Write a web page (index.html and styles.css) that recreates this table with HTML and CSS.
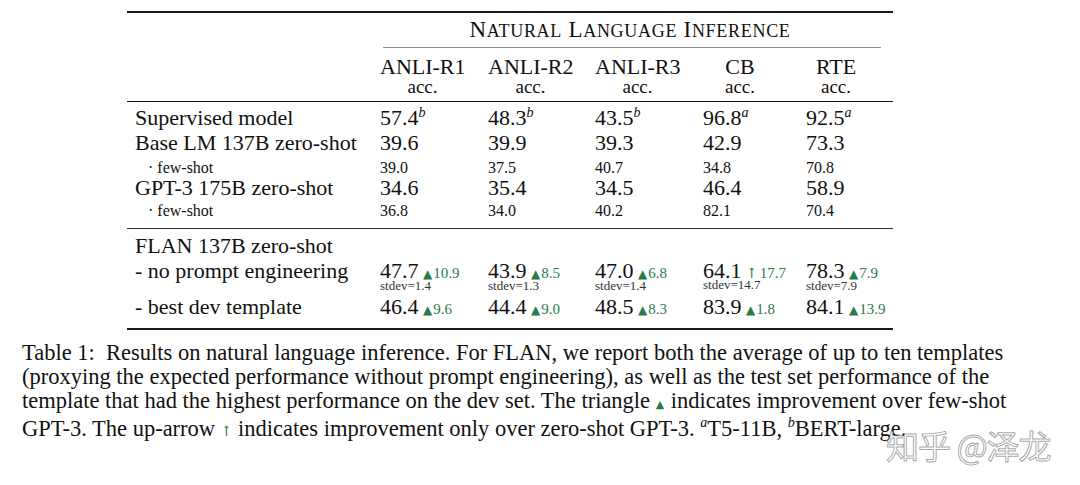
FILE: index.html
```html
<!DOCTYPE html>
<html>
<head>
<meta charset="utf-8">
<link rel="stylesheet" href="styles.css">
</head>
<body>
<div class="page">
  <table class="results">
    <colgroup>
      <col class="c-label"><col class="c1"><col class="c2"><col class="c3"><col class="c4"><col class="c5">
    </colgroup>
    <thead>
      <tr class="group-row">
        <th></th>
        <th colspan="5" class="group"><div class="group-inner">N<span class="sc">ATURAL</span> L<span class="sc">ANGUAGE</span> I<span class="sc">NFERENCE</span></div></th>
      </tr>
      <tr class="head-row">
        <th></th>
        <th class="h1">ANLI-R1<span class="metric">acc.</span></th>
        <th class="h2">ANLI-R2<span class="metric">acc.</span></th>
        <th class="h3">ANLI-R3<span class="metric">acc.</span></th>
        <th class="h4">CB<span class="metric">acc.</span></th>
        <th class="h5">RTE<span class="metric">acc.</span></th>
      </tr>
    </thead>
    <tbody class="grp1">
      <tr class="main first">
        <td class="label">Supervised model</td>
        <td>57.4<sup><i>b</i></sup></td>
        <td>48.3<sup><i>b</i></sup></td>
        <td>43.5<sup><i>b</i></sup></td>
        <td>96.8<sup><i>a</i></sup></td>
        <td>92.5<sup><i>a</i></sup></td>
      </tr>
      <tr class="main">
        <td class="label">Base LM 137B zero-shot</td>
        <td>39.6</td><td>39.9</td><td>39.3</td><td>42.9</td><td>73.3</td>
      </tr>
      <tr class="small s1">
        <td class="label sub">· few-shot</td>
        <td>39.0</td><td>37.5</td><td>40.7</td><td>34.8</td><td>70.8</td>
      </tr>
      <tr class="main">
        <td class="label">GPT-3 175B zero-shot</td>
        <td>34.6</td><td>35.4</td><td>34.5</td><td>46.4</td><td>58.9</td>
      </tr>
      <tr class="small s2 last">
        <td class="label sub">· few-shot</td>
        <td>36.8</td><td>34.0</td><td>40.2</td><td>82.1</td><td>70.4</td>
      </tr>
    </tbody>
    <tbody class="grp2">
      <tr class="main first">
        <td class="label">FLAN 137B zero-shot</td>
        <td></td><td></td><td></td><td></td><td></td>
      </tr>
      <tr class="main stack">
        <td class="label">- no prompt engineering</td>
        <td>47.7 <span class="gain"><span class="tri">▲</span>10.9</span><span class="sd">stdev=1.4</span></td>
        <td>43.9 <span class="gain"><span class="tri">▲</span>8.5</span><span class="sd">stdev=1.3</span></td>
        <td>47.0 <span class="gain"><span class="tri">▲</span>6.8</span><span class="sd">stdev=1.4</span></td>
        <td>64.1 <span class="gain"><span class="arr">↑</span>17.7</span><span class="sd">stdev=14.7</span></td>
        <td>78.3 <span class="gain"><span class="tri">▲</span>7.9</span><span class="sd">stdev=7.9</span></td>
      </tr>
      <tr class="main last">
        <td class="label">- best dev template</td>
        <td>46.4 <span class="gain"><span class="tri">▲</span>9.6</span></td>
        <td>44.4 <span class="gain"><span class="tri">▲</span>9.0</span></td>
        <td>48.5 <span class="gain"><span class="tri">▲</span>8.3</span></td>
        <td>83.9 <span class="gain"><span class="tri">▲</span>1.8</span></td>
        <td>84.1 <span class="gain"><span class="tri">▲</span>13.9</span></td>
      </tr>
    </tbody>
  </table>

  <p class="caption">Table 1:&nbsp; Results on natural language inference. For FLAN, we report both the average of up to ten templates<br>(proxying the expected performance without prompt engineering), as well as the test set performance of the<br>template that had the highest performance on the dev set. The triangle <span class="tri cap-tri">▲</span> indicates improvement over few-shot<br>GPT-3. The up-arrow <span class="arr cap-arr">↑</span> indicates improvement only over zero-shot GPT-3. <sup><i>a</i></sup>T5-11B, <sup><i>b</i></sup>BERT-large.</p>

  <div class="watermark">知乎 @泽龙</div>
</div>
</body>
</html>
```
FILE: styles.css
```css
html, body {
  margin: 0;
  padding: 0;
  background: #ffffff;
}

body {
  font-family: "Liberation Serif", "Times New Roman", serif;
  color: #111111;
  width: 1080px;
  height: 485px;
  overflow: hidden;
}

.page {
  position: relative;
  padding-top: 11px;
}

.results {
  margin-left: 127px;
  width: 766px;
  table-layout: fixed;
  border-collapse: collapse;
  border-top: 2px solid #1a1a1a;
  border-bottom: 2px solid #1a1a1a;
}

.c-label { width: 253px; }
.c1 { width: 108px; }
.c2 { width: 107px; }
.c3 { width: 108px; }
.c4 { width: 103px; }
.c5 { width: 87px; }

.results th,
.results td {
  padding: 0;
  font-weight: normal;
  text-align: left;
  white-space: nowrap;
  vertical-align: top;
}

/* group heading */
.group-row th {
  height: 35px;
}
.group-inner {
  margin: 0 12px 0 3px;
  height: 34px;
  line-height: 34px;
  text-align: center;
  font-size: 23px;
  letter-spacing: 0.7px;
  border-bottom: 1px solid #8a8a8a;
  padding-right: 4px;
}
.sc {
  font-size: 18px;
}

/* column heads */
.head-row th {
  text-align: center;
  font-size: 22px;
  line-height: 22px;
  padding-top: 8px;
  padding-bottom: 5px;
}
.head-row th .metric {
  display: block;
  font-size: 19px;
  line-height: 18px;
}
.h1 { padding-right: 23px !important; }
.h2 { padding-right: 22px !important; }
.h3 { padding-right: 23px !important; }
.h4 { padding-right: 29px !important; }
.h5 { padding-right: 27px !important; }

.results thead {
  border-bottom: 1px solid #1a1a1a;
}

.grp1 {
  border-bottom: 1px solid #333333;
}

/* body rows */
tr.main td {
  font-size: 22px;
  line-height: 22px;
  height: 22px;
}
tr.small td {
  font-size: 16px;
  line-height: 17px;
}
tr.s1 td {
  padding-top: 5px;
  padding-bottom: 1px;
}
tr.s2 td {
  padding-top: 3px;
}
.grp1 tr.first td {
  padding-top: 5px;
  padding-bottom: 3px;
}
.grp2 tr.first td {
  padding-top: 6px;
}
.grp1 tr.last td {
  padding-bottom: 9px;
}
.grp2 tr.last td {
  padding-bottom: 7px;
}

tr.stack td {
  padding-top: 3px;
}
tr.stack + tr td {
  padding-top: 4px;
}

.label {
  padding-left: 8px !important;
}
.label.sub {
  padding-left: 21px !important;
}

sup {
  font-size: 14px;
  line-height: 0;
  vertical-align: 8px;
}

.gain {
  color: #2b7a4b;
  font-size: 15px;
  margin-left: -1px;
}
.tri {
  font-family: "DejaVu Sans", sans-serif;
  font-size: 12px;
  margin-right: 1px;
}
.arr {
  font-family: "DejaVu Serif", serif;
  font-size: 14px;
  margin-right: 2px;
}

.sd {
  display: block;
  font-size: 13px;
  line-height: 12px;
  margin-top: -5px;
  color: #333333;
}

/* caption */
.caption {
  margin: 11px 0 0 22px;
  font-size: 22.5px;
  line-height: 24px;
  white-space: nowrap;
}
.cap-tri {
  color: #2b7a4b;
  font-size: 11px;
}
.cap-arr {
  color: #2b7a4b;
  font-size: 14px;
  margin-right: 0;
}
.caption sup {
  font-size: 14px;
  vertical-align: 9px;
}

/* watermark */
.watermark {
  position: absolute;
  left: 886px;
  top: 426px;
  font-family: "Noto Sans CJK SC", sans-serif;
  font-size: 33px;
  line-height: 38px;
  color: rgba(255, 255, 255, 0.65);
  -webkit-text-stroke: 1px rgba(90, 90, 90, 0.55);
  letter-spacing: -1px;
}
```
